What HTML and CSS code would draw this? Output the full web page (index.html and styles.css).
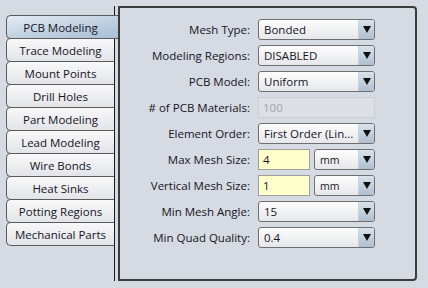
FILE: index.html
```html
<!DOCTYPE html>
<html>
<head>
<meta charset="utf-8">
<link rel="stylesheet" href="styles.css">
</head>
<body>
<div class="window">
  <div class="strip">
    <div class="tab selected">PCB Modeling</div>
    <div class="tab">Trace Modeling</div>
    <div class="tab">Mount Points</div>
    <div class="tab">Drill Holes</div>
    <div class="tab">Part Modeling</div>
    <div class="tab">Lead Modeling</div>
    <div class="tab">Wire Bonds</div>
    <div class="tab">Heat Sinks</div>
    <div class="tab">Potting Regions</div>
    <div class="tab last">Mechanical Parts</div>
  </div>
  <div class="panel">
    <div class="form">
      <div class="label">Mesh Type:</div>
      <div class="combo"><span class="val">Bonded</span><span class="btn"><span class="arrow"></span></span></div>

      <div class="label">Modeling Regions:</div>
      <div class="combo"><span class="val">DISABLED</span><span class="btn"><span class="arrow"></span></span></div>

      <div class="label">PCB Model:</div>
      <div class="combo"><span class="val">Uniform</span><span class="btn"><span class="arrow"></span></span></div>

      <div class="label"># of PCB Materials:</div>
      <div class="field disabled">100</div>

      <div class="label">Element Order:</div>
      <div class="combo"><span class="val">First Order (Lin...</span><span class="btn"><span class="arrow"></span></span></div>

      <div class="label">Max Mesh Size:</div>
      <div class="pair">
        <div class="field yellow">4</div>
        <div class="combo unit"><span class="val">mm</span><span class="btn"><span class="arrow"></span></span></div>
      </div>

      <div class="label">Vertical Mesh Size:</div>
      <div class="pair">
        <div class="field yellow">1</div>
        <div class="combo unit"><span class="val">mm</span><span class="btn"><span class="arrow"></span></span></div>
      </div>

      <div class="label">Min Mesh Angle:</div>
      <div class="combo"><span class="val">15</span><span class="btn"><span class="arrow"></span></span></div>

      <div class="label">Min Quad Quality:</div>
      <div class="combo"><span class="val">0.4</span><span class="btn"><span class="arrow"></span></span></div>
    </div>
  </div>
</div>
</body>
</html>
```
FILE: styles.css
```css
* { box-sizing: border-box; }
html, body {
  margin: 0;
  padding: 0;
  width: 428px;
  height: 288px;
  overflow: hidden;
  background: #d6dae2;
  font-family: "Open Sans", "Liberation Sans", sans-serif;
  font-size: 11.5px;
  color: #15151f;
}
.window {
  display: flex;
  padding-top: 6px;
  height: 281px;
}
.strip {
  margin-left: 6px;
  width: 109px;
  border-right: 1px solid #1a1a1a;
  padding-top: 9px;
  display: flex;
  flex-direction: column;
}
.tab {
  height: 24px;
  margin-bottom: -1px;
  border: 1px solid #5a5a5a;
  border-right: none;
  border-radius: 5px 0 0 5px;
  background: linear-gradient(#f8f8f9, #e3e4e8);
  display: flex;
  align-items: center;
  justify-content: center;
  white-space: nowrap;
  position: relative;
}
.tab.selected {
  margin-right: -4px;
  z-index: 1;
  background: linear-gradient(170deg, #e6edf4 0%, #c3d2e1 50%, #a9bfd5 100%);
  padding-right: 4px;
}
.panel {
  margin-left: 3px;
  width: 299px;
  border: 2px solid #3c3c3c;
  border-radius: 0 4px 4px 0;
  padding-top: 11px;
}
.form {
  display: grid;
  grid-template-columns: 130px 117px;
  grid-auto-rows: 21px;
  column-gap: 8px;
  row-gap: 5px;
}
.label {
  text-align: right;
  display: flex;
  align-items: center;
  justify-content: flex-end;
  white-space: nowrap;
  padding-bottom: 1px;
}
.combo {
  display: flex;
  border: 1px solid #6f6f6f;
  border-radius: 3px;
  background: linear-gradient(#fdfdfd, #e6e7ea);
  overflow: hidden;
}
.combo .val {
  flex: 1;
  padding-left: 5px;
  display: flex;
  align-items: center;
  white-space: nowrap;
  overflow: hidden;
}
.combo .btn {
  width: 16px;
  border-left: 1px solid #c9d2dc;
  background: linear-gradient(#dbe3eb, #aebfd0);
  display: flex;
  align-items: center;
  justify-content: center;
}
.arrow {
  width: 0;
  height: 0;
  border-left: 4px solid transparent;
  border-right: 4px solid transparent;
  border-top: 7px solid #111;
}
.combo.unit {
  width: 61px;
}
.combo.unit .val {
  font-size: 10.5px;
}
.field {
  border: 1px solid #a3a6ab;
  padding-left: 4px;
  display: flex;
  align-items: center;
}
.field.disabled {
  background: #dcdfe4;
  border-color: #cbcfd5;
  color: #a0a3a8;
}
.field.yellow {
  width: 52px;
  background: #ffffcb;
  border-color: #9e9e9e;
}
.pair {
  display: flex;
  gap: 4px;
}
```
